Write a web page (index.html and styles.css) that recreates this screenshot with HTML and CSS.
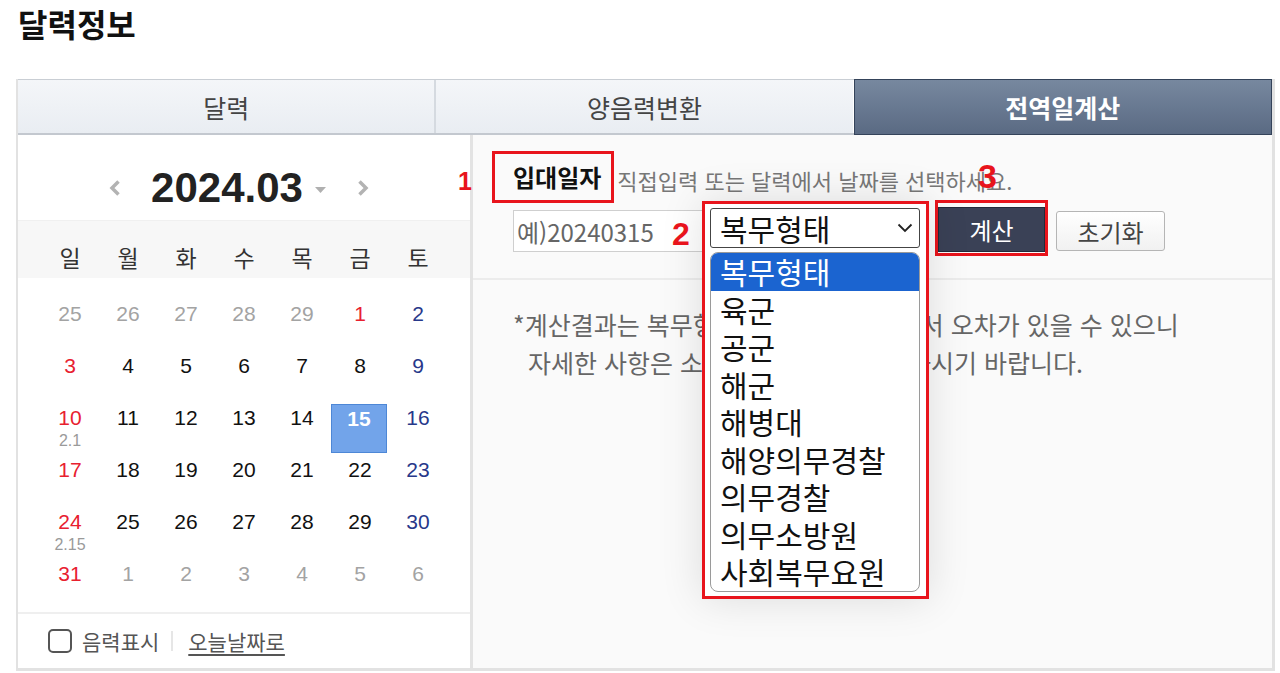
FILE: index.html
```html
<!DOCTYPE html>
<html lang="ko">
<head>
    <meta charset="UTF-8">
    <meta name="viewport" content="width=device-width, initial-scale=1.0">
    <title>달력정보</title>
    <link rel="stylesheet" href="styles.css">
</head>
<body>
    <h1 class="title">달력정보</h1>

    <div class="cal-box">
        <!-- 탭 -->
        <div class="tabs">
            <div class="tab">달력</div>
            <div class="tab">양음력변환</div>
            <div class="tab on">전역일계산</div>
        </div>

        <div class="panes">
            <!-- 달력 -->
            <div class="cal">
                <div class="cal-head">
                    <svg class="arrow" width="12" height="18" viewBox="0 0 12 18"><path d="M9.5 2.5 L3 9 L9.5 15.5" fill="none" stroke="#b3b3b3" stroke-width="3.5"/></svg>
                    <span class="ym">2024.03</span>
                    <svg class="caret" width="11" height="6" viewBox="0 0 11 6"><path d="M0 0 H11 L5.5 6 Z" fill="#b0b0b0"/></svg>
                    <svg class="arrow next" width="12" height="18" viewBox="0 0 12 18"><path d="M2.5 2.5 L9 9 L2.5 15.5" fill="none" stroke="#b3b3b3" stroke-width="3.5"/></svg>
                </div>

                <div class="week">
                    <span>일</span><span>월</span><span>화</span><span>수</span><span>목</span><span>금</span><span>토</span>
                </div>

                <div class="days">
                    <div class="day other">25</div>
                    <div class="day other">26</div>
                    <div class="day other">27</div>
                    <div class="day other">28</div>
                    <div class="day other">29</div>
                    <div class="day sun">1</div>
                    <div class="day sat">2</div>

                    <div class="day sun">3</div>
                    <div class="day">4</div>
                    <div class="day">5</div>
                    <div class="day">6</div>
                    <div class="day">7</div>
                    <div class="day">8</div>
                    <div class="day sat">9</div>

                    <div class="day sun">10<small>2.1</small></div>
                    <div class="day">11</div>
                    <div class="day">12</div>
                    <div class="day">13</div>
                    <div class="day">14</div>
                    <div class="day sel">15</div>
                    <div class="day sat">16</div>

                    <div class="day sun">17</div>
                    <div class="day">18</div>
                    <div class="day">19</div>
                    <div class="day">20</div>
                    <div class="day">21</div>
                    <div class="day">22</div>
                    <div class="day sat">23</div>

                    <div class="day sun">24<small>2.15</small></div>
                    <div class="day">25</div>
                    <div class="day">26</div>
                    <div class="day">27</div>
                    <div class="day">28</div>
                    <div class="day">29</div>
                    <div class="day sat">30</div>

                    <div class="day sun">31</div>
                    <div class="day other">1</div>
                    <div class="day other">2</div>
                    <div class="day other">3</div>
                    <div class="day other">4</div>
                    <div class="day other">5</div>
                    <div class="day other">6</div>
                </div>

                <div class="cal-foot">
                    <span class="chk"></span>
                    <span>음력표시</span>
                    <span class="sep"></span>
                    <span class="today">오늘날짜로</span>
                </div>
            </div>

            <!-- 전역일계산 -->
            <div class="calc">
                <span class="mark m1">1</span>
                <span class="mark m2">2</span>
                <span class="mark m3">3</span>

                <div class="calc-top">
                    <div class="label-row">
                        <span class="label">입대일자</span>
                        <span class="hint">직접입력 또는 달력에서 날짜를 선택하세요.</span>
                    </div>
                    <div class="input-row">
                        <input class="date" type="text" placeholder="예)20240315">
                        <div class="pick">
                            <div class="select">
                                <span>복무형태</span>
                                <svg width="16" height="10" viewBox="0 0 16 10"><path d="M1.5 1.5 L8 8 L14.5 1.5" fill="none" stroke="#222" stroke-width="1.8"/></svg>
                            </div>
                            <ul class="list">
                                <li class="on">복무형태</li>
                                <li>육군</li>
                                <li>공군</li>
                                <li>해군</li>
                                <li>해병대</li>
                                <li>해양의무경찰</li>
                                <li>의무경찰</li>
                                <li>의무소방원</li>
                                <li>사회복무요원</li>
                            </ul>
                        </div>
                        <div class="calc-mark"><button class="btn-calc">계산</button></div>
                        <button class="btn-reset">초기화</button>
                    </div>
                </div>

                <p class="note">*계산결과는 복무형태 및 입대일에 따라서 오차가 있을 수 있으니<br>자세한 사항은 소속 부대에 직접 문의하시기 바랍니다.</p>
            </div>
        </div>
    </div>
</body>
</html>
```

FILE: styles.css
```css
/* GLOBAL */
body {
    margin: 0;
    font-family: "Noto Sans CJK KR", "Noto Sans", sans-serif;
    color: #222;
    background: #fff;
}

.title {
    margin: 0;
    padding: 4px 0 0 18px;
    font-size: 32px;
    line-height: 38px;
    font-weight: 700;
    color: #111;
}

.cal-box {
    margin: 37px 5px 0 16px;
    border: solid #e2e2e2;
    border-width: 0 3px 3px 2px;
}

/* TABS */
.tabs {
    display: flex;
    height: 56px;
    box-sizing: border-box;
    border-top: 1px solid #c9ced4;
    border-bottom: 2px solid #c3c8cf;
}

.tab {
    flex: 1;
    display: flex;
    align-items: center;
    justify-content: center;
    font-size: 25px;
    color: #444;
    background: linear-gradient(#f4f6f9, #e9edf2);
}

.tab + .tab {
    border-left: 2px solid #d5dae0;
}

.tab.on {
    margin: -1px 0 -2px 1px;
    border: 1px solid #34435a;
    background: linear-gradient(#77889f, #5a6a83);
    color: #fff;
    font-weight: 700;
}

.panes {
    display: flex;
}

/* CALENDAR */
.cal {
    width: 452px;
    border-right: 3px solid #e3e3e3;
    background: #fff;
}

.cal-head {
    height: 85px;
    box-sizing: border-box;
    padding: 20px 10px 0 0;
    display: flex;
    align-items: center;
    justify-content: center;
}

.ym {
    margin-left: 30px;
    font-family: "Liberation Sans", Arial, sans-serif;
    font-size: 42px;
    font-weight: 700;
    color: #222;
}

.caret {
    margin: 4px 0 0 12px;
}

.arrow.next {
    margin-left: 31px;
}

.week {
    display: grid;
    grid-template-columns: repeat(7, 58px);
    align-items: end;
    height: 58px;
    box-sizing: border-box;
    padding: 0 23px 9px;
    border-top: 1px solid #f0f0f0;
    background: #f7f7f7;
    font-size: 23px;
    line-height: 23px;
    text-align: center;
    color: #333;
}

.days {
    display: grid;
    grid-template-columns: repeat(7, 58px);
    grid-auto-rows: 52px;
    padding: 22px 23px 0;
}

.day {
    text-align: center;
    font-family: "Liberation Sans", Arial, sans-serif;
    font-size: 21px;
    line-height: 28px;
    color: #111;
}

.day small {
    display: block;
    font-size: 16px;
    line-height: 18px;
    color: #9a9a9a;
}

.day.other { color: #a3a3a3; }
.day.sun { color: #e8202f; }
.day.sat { color: #27388a; }

.day.sel {
    height: 49px;
    margin-right: 2px;
    box-sizing: border-box;
    border: 1px solid #4d87d6;
    background: #72a4ea;
    color: #fff;
    font-weight: 700;
}

.cal-foot {
    display: flex;
    align-items: center;
    height: 56px;
    box-sizing: border-box;
    padding-left: 30px;
    border-top: 2px solid #efefef;
    font-size: 21px;
    color: #555;
}

.chk {
    width: 24px;
    height: 24px;
    margin-right: 10px;
    box-sizing: border-box;
    border: 2px solid #555;
    border-radius: 5px;
}

.sep {
    width: 2px;
    height: 20px;
    margin: 0 15px 0 12px;
    background: #e6e6e6;
}

.today {
    text-decoration: underline;
    text-underline-offset: 4px;
}

/* CALCULATOR */
.calc {
    flex: 1;
    position: relative;
    background: #fafafa;
}

.calc-top {
    height: 145px;
    box-sizing: border-box;
    padding: 16px 0 0 19px;
    border-bottom: 2px solid #ececec;
}

.label-row {
    display: flex;
    align-items: center;
}

.label {
    height: 52px;
    box-sizing: border-box;
    padding: 2px 10px 0 18px;
    border: 3px solid #e8141c;
    font-size: 24px;
    line-height: 42px;
    font-weight: 700;
    color: #111;
}

.hint {
    margin-left: 3px;
    padding-top: 6px;
    font-size: 22px;
    color: #777;
}

.input-row {
    display: flex;
    align-items: flex-start;
    margin: -3px 0 0 21px;
}

.date {
    width: 197px;
    height: 42px;
    margin: 10px 0 0;
    box-sizing: border-box;
    padding: 0 0 0 3px;
    border: 1px solid #cfcfcf;
    background: #fff;
    font-family: "Noto Sans CJK KR", sans-serif;
    font-size: 24px;
}

.date::placeholder {
    color: #666;
}

.pick {
    position: relative;
    width: 210px;
    height: 40px;
    margin-top: 8px;
}

/* 펼쳐진 목록 뒤 흰 바탕 */
.pick::before {
    content: "";
    position: absolute;
    left: -5px;
    top: -4px;
    width: 221px;
    height: 392px;
    background: #fff;
    z-index: 1;
}

.pick::after {
    content: "";
    position: absolute;
    left: -8px;
    top: -7px;
    width: 221px;
    height: 392px;
    border: 3px solid #e8141c;
    box-shadow: 0 0 40px rgba(0, 0, 0, 0.12);
    pointer-events: none;
    z-index: 3;
}

.select {
    position: relative;
    z-index: 2;
    display: flex;
    justify-content: space-between;
    align-items: center;
    height: 40px;
    box-sizing: border-box;
    padding: 0 6px 0 9px;
    border: 1px solid #444;
    border-radius: 3px;
    background: #fff;
    font-size: 30px;
    line-height: 38px;
    color: #111;
}

.list {
    position: absolute;
    left: 0;
    top: 44px;
    width: 210px;
    height: 340px;
    box-sizing: border-box;
    margin: 0;
    padding: 0;
    list-style: none;
    border: 1px solid #9a9a9a;
    border-radius: 8px;
    background: #fff;
    overflow: hidden;
    font-size: 30px;
    z-index: 2;
}

.list li {
    height: 37.5px;
    line-height: 37.5px;
    padding-left: 9px;
    color: #111;
}

.list li.on {
    background: #1b64d0;
    color: #fff;
}

.calc-mark {
    margin-left: 15px;
    padding: 4px 0 1px;
    border: 3px solid #e8141c;
}

.btn-calc, .btn-reset {
    display: block;
    font-family: "Noto Sans CJK KR", sans-serif;
    font-size: 24px;
    cursor: pointer;
}

.btn-calc {
    width: 107px;
    height: 45px;
    border: 1px solid #222a3a;
    background: #3a4156;
    color: #fff;
}

.btn-reset {
    width: 109px;
    height: 40px;
    margin: 11px 0 0 8px;
    border: 1px solid #b5b5b5;
    border-radius: 3px;
    background: linear-gradient(#fff, #f1f1f1);
    color: #444;
}

.note {
    margin: 0;
    padding: 25px 0 0 55px;
    text-indent: -15px;
    font-size: 25px;
    line-height: 38px;
    color: #666;
}

/* ANNOTATIONS */
.mark {
    position: absolute;
    font-family: "Liberation Sans", Arial, sans-serif;
    font-weight: 700;
    line-height: 1;
    color: #e8141c;
    z-index: 4;
}

.m1 { left: -15px; top: 34px; font-size: 25px; }
.m2 { left: 199px; top: 83px; font-size: 32px; }
.m3 { left: 505px; top: 24px; font-size: 34px; }
```
